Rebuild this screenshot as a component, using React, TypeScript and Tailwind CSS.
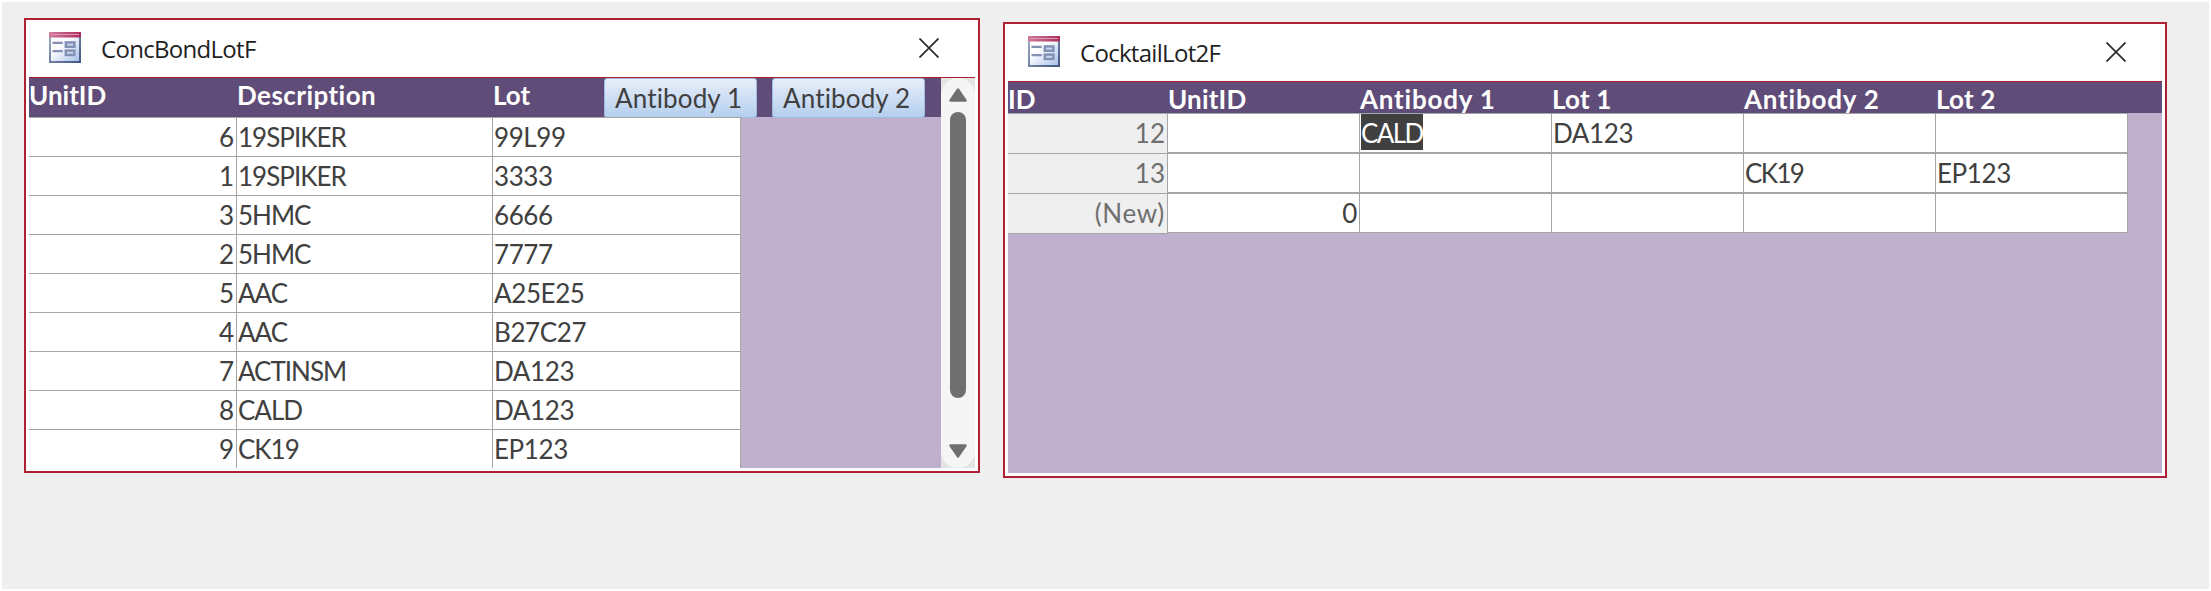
import { clsx } from "clsx";

type Unit = { id: number; description: string; lot: string };

const units: Unit[] = [
  { id: 6, description: "19SPIKER", lot: "99L99" },
  { id: 1, description: "19SPIKER", lot: "3333" },
  { id: 3, description: "5HMC", lot: "6666" },
  { id: 2, description: "5HMC", lot: "7777" },
  { id: 5, description: "AAC", lot: "A25E25" },
  { id: 4, description: "AAC", lot: "B27C27" },
  { id: 7, description: "ACTINSM", lot: "DA123" },
  { id: 8, description: "CALD", lot: "DA123" },
  { id: 9, description: "CK19", lot: "EP123" },
];

const cocktailColumns = ["UnitID", "Antibody 1", "Lot 1", "Antibody 2", "Lot 2"];

const cocktails = [
  { id: "12", cells: ["", "CALD", "DA123", "", ""] },
  { id: "13", cells: ["", "", "", "CK19", "EP123"] },
  { id: "(New)", cells: ["0", "", "", "", ""] },
];

function FormIcon() {
  return (
    <svg width="32" height="31" viewBox="0 0 32 31" className="shrink-0">
      <defs>
        <linearGradient id="formBody" x1="0" y1="0" x2="1" y2="1">
          <stop offset="0.35" stopColor="#fdfdff" />
          <stop offset="1" stopColor="#a9c0ea" />
        </linearGradient>
        <linearGradient id="formBar" x1="0" y1="0" x2="1" y2="0">
          <stop offset="0" stopColor="#d07a9c" />
          <stop offset="1" stopColor="#ae2c5c" />
        </linearGradient>
        <linearGradient id="formEdge" x1="0" y1="0" x2="1" y2="1">
          <stop offset="0" stopColor="#a3b0c6" />
          <stop offset="1" stopColor="#3f557f" />
        </linearGradient>
      </defs>
      <rect width="32" height="31" fill="url(#formEdge)" />
      <rect x="2" y="5" width="28" height="24" fill="url(#formBody)" />
      <rect width="32" height="5.5" fill="url(#formBar)" />
      <rect x="2" y="2" width="28" height="1" fill="#dd9ab5" />
      <path d="M3.5 10.8h10.3M3.5 19.2h10.3" stroke="#8390b4" strokeWidth="2.2" />
      <rect x="16.8" y="10.4" width="8.6" height="4.4" fill="#c9d5ec" stroke="#8190b5" strokeWidth="2.4" />
      <rect x="16.8" y="18.6" width="8.6" height="4.4" fill="#c9d5ec" stroke="#8190b5" strokeWidth="2.4" />
    </svg>
  );
}

function TitleBar({ title }: { title: string }) {
  return (
    <div className="flex h-[58px] items-start border-b border-[#b01f30] pl-5 pr-9 pt-3">
      <FormIcon />
      <h1 className="ml-5 mt-px font-['Open_Sans',sans-serif] text-[24px] leading-8 tracking-[-0.7px] text-[#1f1f1f]">
        {title}
      </h1>
      <button className="ml-auto mt-1.5" aria-label="Close">
        <svg width="20" height="20" viewBox="0 0 20 20">
          <path d="M0.5 0.5l19 19M19.5 0.5l-19 19" stroke="#2b2b2b" strokeWidth="1.7" />
        </svg>
      </button>
    </div>
  );
}

function HeaderButton({ label }: { label: string }) {
  return (
    <button className="h-10 w-[153px] rounded-[3px] border border-[#9dbbe3] bg-linear-to-b from-[#e7eefa] to-[#b5cfee] pl-2.5 text-left leading-[38px] tracking-[0.15px] text-[#404040]">
      {label}
    </button>
  );
}

function ScrollBar() {
  return (
    <div className="w-[34px] bg-[#e4e4e4]">
      <div className="flex h-full flex-col items-center rounded-[17px] bg-[#f5f5f5] pb-2.5 pt-2.5">
        <svg width="18" height="14" viewBox="0 0 18 14" className="shrink-0">
          <path d="M9 1.5L16.5 12.5H1.5z" fill="#6f6f6f" stroke="#6f6f6f" strokeWidth="2.4" strokeLinejoin="round" />
        </svg>
        <div className="mt-2.5 h-[286px] w-4 rounded-full bg-[#6f6f6f]" />
        <svg width="18" height="14" viewBox="0 0 18 14" className="mt-auto shrink-0">
          <path d="M9 12.5L16.5 1.5H1.5z" fill="#6f6f6f" stroke="#6f6f6f" strokeWidth="2.4" strokeLinejoin="round" />
        </svg>
      </div>
    </div>
  );
}

function ConcBondLot() {
  return (
    <section className="mt-4 flex h-[455px] w-[956px] flex-col border-2 border-[#ae2133] bg-white px-[3px] pb-[3px]">
      <TitleBar title="ConcBondLotF" />
      <div className="flex min-h-0 flex-1">
        <div className="flex flex-1 flex-col bg-[#bfb1ce]">
          <div className="flex h-[39px] shrink-0 bg-[#604c78] font-bold leading-[34px] text-white">
            <div className="w-[208px]">UnitID</div>
            <div className="w-[256px] tracking-[0.45px]">Description</div>
            <div className="w-[82px]">Lot</div>
            <div className="ml-[29px] flex gap-[15px] font-normal">
              <HeaderButton label="Antibody 1" />
              <HeaderButton label="Antibody 2" />
            </div>
          </div>
          <div className="min-h-0 w-[712px] flex-1 overflow-hidden">
            {units.map((unit) => (
              <div
                key={unit.id}
                className="flex h-[39px] border-t border-[#a5a5a5] bg-white leading-[39px]"
              >
                <div className="w-[208px] border-r border-[#a5a5a5] pr-0.5 text-right">{unit.id}</div>
                <div className="w-[256px] border-r border-[#a5a5a5] pl-px tracking-[-1px]">{unit.description}</div>
                <div className="w-[248px] border-r border-[#a5a5a5] pl-px tracking-[-0.4px]">{unit.lot}</div>
              </div>
            ))}
          </div>
        </div>
        <ScrollBar />
      </div>
    </section>
  );
}

function CocktailLot() {
  return (
    <section className="mt-5 flex h-[456px] w-[1164px] flex-col border-2 border-[#ae2133] bg-white px-[3px] pb-[3px]">
      <TitleBar title="CocktailLot2F" />
      <div className="flex-1 bg-[#bfb1ce]">
        <div className="flex h-[31px] bg-[#604c78] pt-1 font-bold leading-[27px] text-white">
          <div className="w-[160px]">ID</div>
          {cocktailColumns.map((column, i) => (
            <div
              key={column}
              className={clsx("w-[192px]", i % 2 === 1 ? "tracking-[0.8px]" : "tracking-[0.2px]")}
            >
              {column}
            </div>
          ))}
        </div>
        <div className="w-[1120px] border-t border-[#a5a5a5]">
          {cocktails.map((row, i) => (
            <div key={row.id} className="flex h-10 leading-[39px]">
              <div
                className={clsx(
                  "w-[160px] border-b border-r border-[#a5a5a5] bg-[#efefef] pr-0.5 text-right text-[#6e6e6e]",
                  row.id === "(New)" && "tracking-[0.7px]",
                )}
              >
                {row.id}
              </div>
              {row.cells.map((cell, j) => (
                <div
                  key={cocktailColumns[j]}
                  className={clsx(
                    "w-[192px] border-r border-[#a5a5a5] bg-white",
                    i === cocktails.length - 1 ? "h-[39px] border-b" : "border-b-2",
                    j === 0 ? "pr-0.5 text-right" : "pl-px",
                    j % 2 === 1 ? "tracking-[-1.6px]" : "tracking-[-0.4px]",
                  )}
                >
                  {/* the first record's antibody has focus, with its text selected */}
                  {i === 0 && j === 1 ? (
                    <span className="block h-9 w-fit bg-[#404040] text-white">{cell}</span>
                  ) : (
                    cell
                  )}
                </div>
              ))}
            </div>
          ))}
        </div>
      </div>
    </section>
  );
}

export default function App() {
  return (
    <main className="flex h-[591px] w-[2211px] items-start gap-[23px] border-2 border-white bg-[#efefef] pl-[22px] font-[Lato,sans-serif] text-[26px] text-[#404040] [font-variant-ligatures:none]">
      <ConcBondLot />
      <CocktailLot />
    </main>
  );
}
